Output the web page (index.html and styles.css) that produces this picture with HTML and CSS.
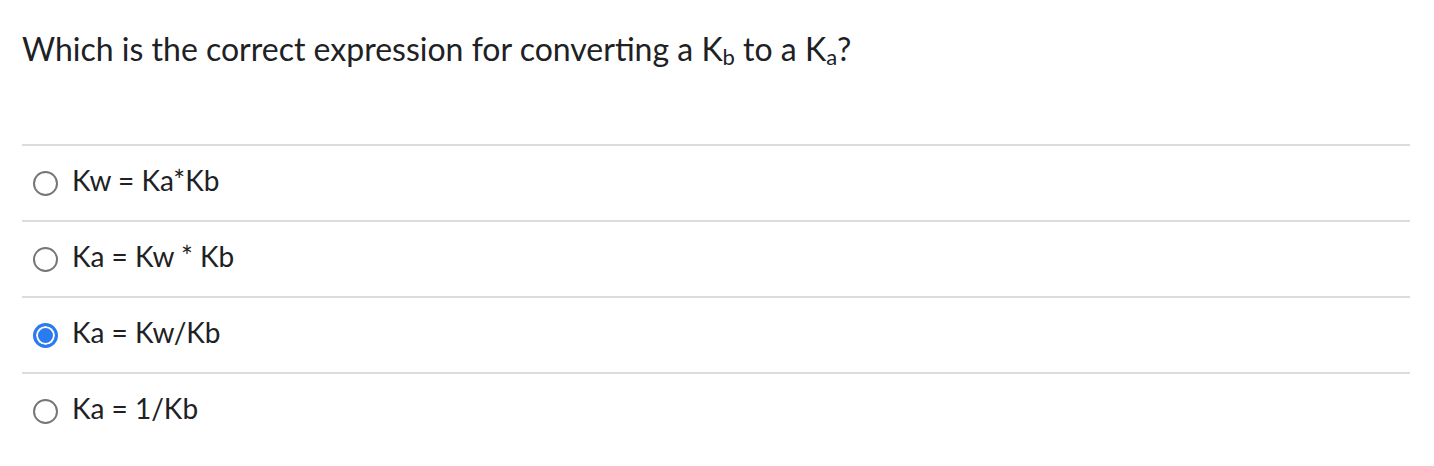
FILE: index.html
```html
<!DOCTYPE html>
<html>
<head>
<meta charset="utf-8">
<link rel="stylesheet" href="styles.css">
</head>
<body>
<div class="quiz">
  <h1 class="question">Which is the correct expression for converting a K<sub>b</sub> to a K<sub>a</sub>?</h1>
  <div class="answers">
    <label class="answer"><span class="radio"></span><span class="text">Kw = Ka*Kb</span></label>
    <label class="answer"><span class="radio"></span><span class="text">Ka = Kw * Kb</span></label>
    <label class="answer"><span class="radio checked"></span><span class="text">Ka = Kw/Kb</span></label>
    <label class="answer"><span class="radio"></span><span class="text">Ka = 1/Kb</span></label>
  </div>
</div>
</body>
</html>
```
FILE: styles.css
```css
html, body {
  margin: 0;
  padding: 0;
  background: #ffffff;
}
body {
  font-family: Lato, "Noto Sans", sans-serif;
  color: #2d3b45;
}
.quiz {
  padding: 26px 24px 0 22px;
}
.question {
  margin: 0;
  font-size: 32px;
  font-weight: 400;
  line-height: 46px;
  color: #202124;
}
.question sub {
  font-size: 22px;
  vertical-align: -4px;
  line-height: 0;
}
.answers {
  margin-top: 72px;
}
.answer {
  box-sizing: border-box;
  display: flex;
  align-items: center;
  gap: 14px;
  height: 76px;
  border-top: 2px solid #dcdcdc;
  padding-left: 11px;
  font-size: 28px;
  color: #202124;
}
.radio {
  box-sizing: border-box;
  width: 25px;
  height: 25px;
  border-radius: 50%;
  border: 2px solid #767676;
  flex: none;
}
.radio.checked {
  border: 3px solid #2b7bf0;
  background: #2b7bf0;
  box-shadow: inset 0 0 0 2px #ffffff;
}
.text {
  line-height: 30px;
  margin-bottom: 6px;
}
```
